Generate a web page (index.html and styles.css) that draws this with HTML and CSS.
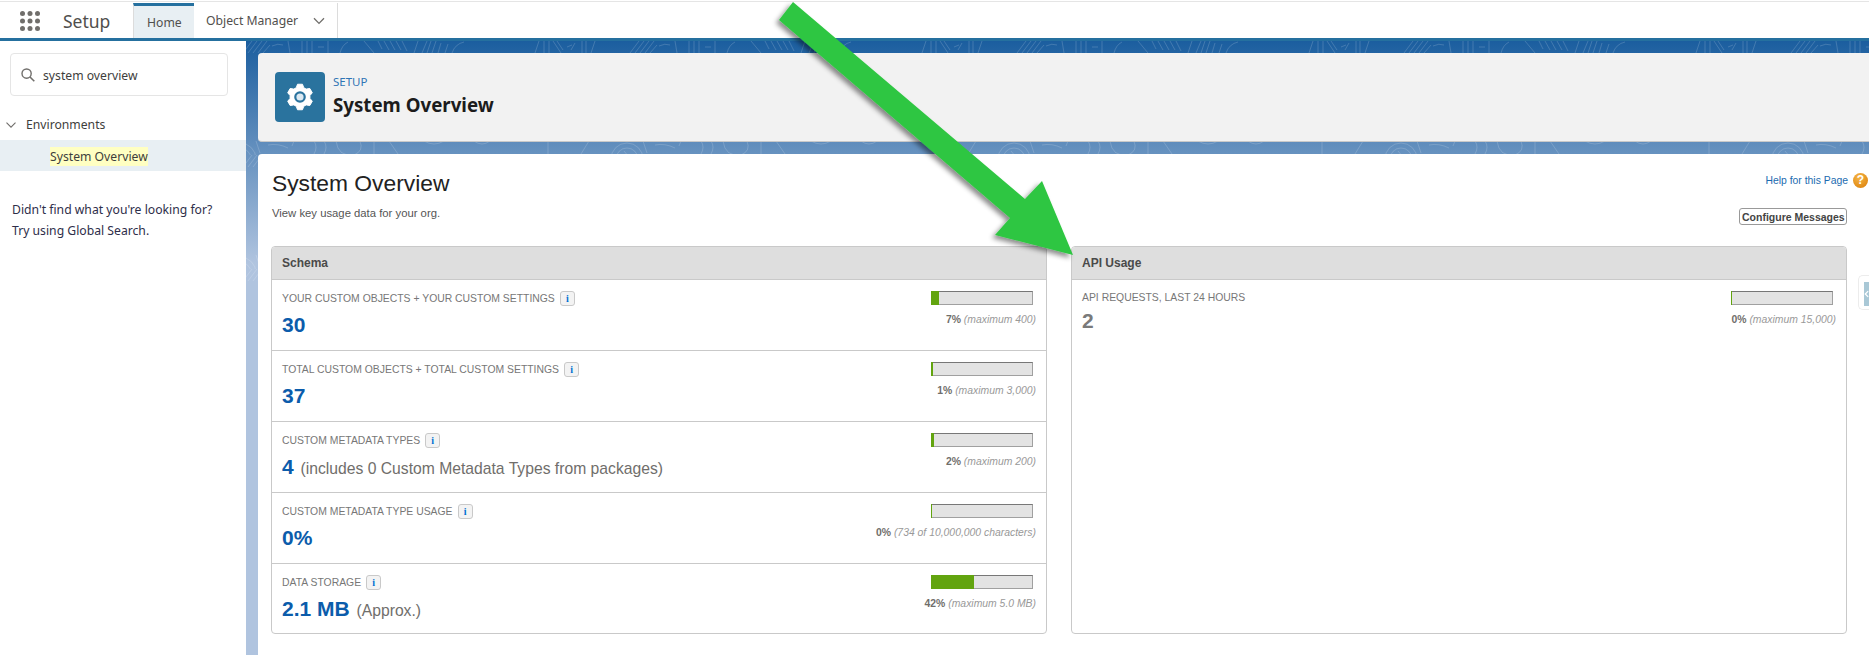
FILE: index.html
```html
<!DOCTYPE html>
<html lang="en">
<head>
<meta charset="utf-8">
<title>System Overview</title>
<link rel="stylesheet" href="styles.css">
</head>
<body>
<div class="page">
  <header class="nav">
    <svg class="app-grid" width="20" height="20" viewBox="0 0 20 20" aria-hidden="true">
      <g fill="#706e6b">
        <circle cx="2.5" cy="2.5" r="2.5"/><circle cx="10" cy="2.5" r="2.5"/><circle cx="17.5" cy="2.5" r="2.5"/>
        <circle cx="2.5" cy="10" r="2.5"/><circle cx="10" cy="10" r="2.5"/><circle cx="17.5" cy="10" r="2.5"/>
        <circle cx="2.5" cy="17.5" r="2.5"/><circle cx="10" cy="17.5" r="2.5"/><circle cx="17.5" cy="17.5" r="2.5"/>
      </g>
    </svg>
    <span class="app-name">Setup</span>
    <a class="tab tab-active">Home</a>
    <a class="tab tab-menu"><span class="tab-text">Object Manager</span>
      <svg class="tab-chevron" width="12" height="8" viewBox="0 0 12 8" aria-hidden="true"><path d="M1 1.2 6 6.4 11 1.2" fill="none" stroke="#706e6b" stroke-width="1.3"/></svg>
    </a>
  </header>
  <main class="main">
    <aside class="sidebar">
      <div class="search">
        <svg width="14" height="14" viewBox="0 0 14 14" aria-hidden="true"><circle cx="5.6" cy="5.6" r="4.6" fill="none" stroke="#706e6b" stroke-width="1.4"/><path d="M9 9l4.3 4.3" stroke="#706e6b" stroke-width="1.6"/></svg>
        <span>system overview</span>
      </div>
      <div class="tree-head">
        <svg width="10" height="6" viewBox="0 0 10 6" aria-hidden="true"><path d="M.5.6 5 5.2 9.5.6" fill="none" stroke="#706e6b" stroke-width="1.1"/></svg>
        <span>Environments</span>
      </div>
      <div class="tree-item"><mark class="hit">System Overview</mark></div>
      <p class="hint">Didn't find what you're looking for?<br>Try using Global Search.</p>
    </aside>
    <section class="content">
      <svg class="texture" width="1623" height="240" aria-hidden="true">
        <defs>
          <pattern id="swirls" x="-104" y="0" width="387" height="114" patternUnits="userSpaceOnUse">
            <g fill="none" stroke="#fff" stroke-opacity=".16" stroke-width="1">
              <path d="M6 12 10 0M15 12V0M20 12V0M24 0 32 12M28 0 34 9M38 6 43 4M46 2 42 9M53 12V0M57 12V0M62 12 66 0"/>
              <path d="M101 12 110 0M106 12 115 0M111 12 120 0M116 12 125 0M121 12 128 4M130 5Q136 2 141 4M148 12 146 0M160 12V0M165 12V0M170 12V0M176 6H182M186 12V0"/>
              <path d="M198 12Q200 4 206 1M222 0 232 12M236 0 240 8M242 0 247 9M248 0 253 9M254 0 259 9M260 0 265 10"/>
              <path d="M272 12 276 0M280 12 285 0M285 12 289 0M290 12 294 0M296 12 299 2M303 12 306 3M310 12Q313 3 322 1"/>
              <circle cx="98" cy="118" r="16"/><circle cx="98" cy="118" r="11"/><path d="M95 110 105 122"/>
              <path d="M19 113V100M52 113 60 100M114 100 118 112M126 104Q136 102 146 107M150 105 152 100M172 113Q176 106 172 100M182 113Q186 106 182 100"/>
              <path d="M194 100Q196 116 212 114Q222 110 218 100M232 113V100M247 100 256 113M282 100Q292 106 302 100M332 100Q340 106 348 100"/>
            </g>
          </pattern>
        </defs>
        <rect class="texture-fill" width="1623" height="240"/>
      </svg>
      <div class="page-header">
        <div class="header-icon">
          <svg width="28" height="28" viewBox="0 0 28 28" aria-hidden="true">
            <polygon fill="#fff" stroke="#fff" stroke-width="1" stroke-linejoin="round" points="11.52,1.24 16.48,1.24 17.75,4.73 20.16,6.12 23.81,5.47 26.29,9.76 23.9,12.61 23.9,15.39 26.29,18.24 23.81,22.53 20.16,21.88 17.75,23.27 16.48,26.76 11.52,26.76 10.25,23.27 7.84,21.88 4.19,22.53 1.71,18.24 4.1,15.39 4.1,12.61 1.71,9.76 4.19,5.47 7.84,6.12 10.25,4.73"/>
            <circle cx="14" cy="14" r="5.8" fill="#2a739e"/>
            <circle cx="14" cy="14" r="3.6" fill="#dbe9f2"/>
          </svg>
        </div>
        <div class="header-text">
          <div class="eyebrow">SETUP</div>
          <h1 class="header-title">System Overview</h1>
        </div>
      </div>
      <div class="card">
        <div class="card-top">
          <div class="card-heading">
            <h2 class="page-title">System Overview</h2>
            <p class="page-desc">View key usage data for your org.</p>
          </div>
          <div class="card-actions">
            <div class="help"><a class="help-link">Help for this Page</a><span class="help-icon">?</span></div>
            <button class="btn">Configure Messages</button>
          </div>
        </div>
        <div class="panels">
          <div class="panel">
            <div class="panel-head">Schema</div>
            <div class="row">
              <div class="row-main">
                <div class="label">YOUR CUSTOM OBJECTS + YOUR CUSTOM SETTINGS <span class="info">i</span></div>
                <div class="value"><b>30</b></div>
              </div>
              <div class="usage"><div class="bar"><div class="fill" style="width:7%"></div></div><div class="note"><b>7%</b> <i>(maximum 400)</i></div></div>
            </div>
            <div class="row">
              <div class="row-main">
                <div class="label">TOTAL CUSTOM OBJECTS + TOTAL CUSTOM SETTINGS <span class="info">i</span></div>
                <div class="value"><b>37</b></div>
              </div>
              <div class="usage"><div class="bar"><div class="fill" style="width:1%"></div></div><div class="note"><b>1%</b> <i>(maximum 3,000)</i></div></div>
            </div>
            <div class="row">
              <div class="row-main">
                <div class="label">CUSTOM METADATA TYPES <span class="info">i</span></div>
                <div class="value"><b>4</b> <span class="value-note">(includes 0 Custom Metadata Types from packages)</span></div>
              </div>
              <div class="usage"><div class="bar"><div class="fill" style="width:2%"></div></div><div class="note"><b>2%</b> <i>(maximum 200)</i></div></div>
            </div>
            <div class="row">
              <div class="row-main">
                <div class="label">CUSTOM METADATA TYPE USAGE <span class="info">i</span></div>
                <div class="value"><b>0%</b></div>
              </div>
              <div class="usage"><div class="bar"><div class="fill" style="width:0%"></div></div><div class="note"><b>0%</b> <i>(734 of 10,000,000 characters)</i></div></div>
            </div>
            <div class="row row-last">
              <div class="row-main">
                <div class="label">DATA STORAGE <span class="info">i</span></div>
                <div class="value"><b>2.1 MB</b> <span class="value-note">(Approx.)</span></div>
              </div>
              <div class="usage"><div class="bar"><div class="fill" style="width:42%"></div></div><div class="note"><b>42%</b> <i>(maximum 5.0 MB)</i></div></div>
            </div>
          </div>
          <div class="panel">
            <div class="panel-head">API Usage</div>
            <div class="row row-last">
              <div class="row-main">
                <div class="label label-plain">API REQUESTS, LAST 24 HOURS</div>
                <div class="value value-muted"><b>2</b></div>
              </div>
              <div class="usage"><div class="bar"><div class="fill" style="width:0%"></div></div><div class="note"><b>0%</b> <i>(maximum 15,000)</i></div></div>
            </div>
          </div>
        </div>
      </div>
      <div class="side-tab"><svg width="6" height="8" viewBox="0 0 6 8" aria-hidden="true"><path d="M5 .5 1.5 4 5 7.5" fill="none" stroke="#fff" stroke-width="1.5"/></svg></div>
    </section>
  </main>
  <svg class="arrow" width="320" height="270" viewBox="0 0 320 270" aria-hidden="true">
    <defs>
      <filter id="arrow-shadow" x="-10%" y="-10%" width="120%" height="120%">
        <feDropShadow dx="-3" dy="3" stdDeviation="2.5" flood-color="#000" flood-opacity=".45"/>
      </filter>
    </defs>
    <polygon fill="#2fc642" filter="url(#arrow-shadow)" points="44,2 30,20 261,218 246,235 324,255 293,181 276,199"/>
  </svg>
</div>
</body>
</html>
```
FILE: styles.css
```css
* { box-sizing: border-box; }
html, body { margin: 0; height: 100%; }
body { background: #fff; font-family: "Liberation Sans", Arial, sans-serif; color: #333; overflow: hidden; }
.page { position: relative; display: flex; flex-direction: column; height: 655px; width: 1869px; overflow: hidden; }

.nav { display: flex; align-items: stretch; height: 40px; margin-top: 1px; padding-top: 1px; border-top: 1px solid #e5e5e5; border-bottom: 3px solid #25709f; font-family: "Noto Sans", sans-serif; flex: none; }
.app-grid { align-self: center; margin-left: 20px; flex: none; }
.app-name { align-self: center; margin: 2px 0 0 23px; width: 70px; font-size: 17.5px; line-height: 1; color: #514f4d; }
.tab { display: flex; align-items: center; font-size: 12.2px; color: #514f4d; white-space: nowrap; }
.tab-active { width: 61px; padding-left: 13px; background: #e8eff3; border-top: 3px solid #25709f; border-left: 1px solid #dcdcdc; }
.tab-menu { width: 144px; border-right: 1px solid #dcdcdc; padding-left: 12px; }
.tab-text { width: 93px; flex: none; }
.tab-chevron { margin-left: 14px; flex: none; }

.main { display: flex; flex: 1; min-height: 0; }
.sidebar { width: 246px; flex: none; padding-top: 12px; font-family: "Noto Sans", sans-serif; font-size: 12.2px; color: #16325c; }
.search { display: flex; align-items: center; gap: 8px; margin: 0 18px 0 10px; height: 43px; padding: 1px 0 0 10px; border: 1px solid #e5e5e5; border-radius: 4px; color: #3e3e3c; }
.tree-head { display: flex; align-items: center; gap: 10px; height: 27px; margin-top: 15px; padding-left: 6px; color: #3e3e3c; }
.tree-item { height: 31px; margin-top: 2px; padding: 2px 0 0 50px; background: #e8eff3; display: flex; align-items: center; }
.hit { background: #ffffc2; color: #3e3e3c; padding: 1px 0; }
.hint { margin: 28px 0 0 12px; line-height: 21px; color: #2e2e4a; }

.content { position: relative; flex: 1; min-width: 0; padding: 12px 0 0 12px; background: #b0c4df; }
.texture { position: absolute; left: 0; top: 0; z-index: 1; }
.texture-fill { fill: url(#swirls); }
.content::before { content: ""; position: absolute; left: 0; right: 0; top: 0; height: 222px; background: linear-gradient(#1b5e9f, #b0c4df); }
.page-header, .card, .side-tab { position: relative; z-index: 2; }

.page-header { display: flex; align-items: center; gap: 8px; height: 89px; margin-bottom: 12px; padding-left: 17px; background: #f2f2f2; border-bottom: 1px solid #c9c9c9; border-radius: 4px 0 0 4px; }
.header-icon { display: flex; align-items: center; justify-content: center; width: 50px; height: 50px; background: #2a739e; border-radius: 4px; }
.header-text { margin-top: -4px; }
.eyebrow { font-family: "Noto Sans", sans-serif; font-size: 11.5px; line-height: 16px; color: #2f75b5; }
.header-title { margin: 3px 0 0; font-family: "Noto Sans", sans-serif; font-size: 18.7px; line-height: 24px; font-weight: 700; color: #1c1c1c; }

.card { height: 501px; padding: 14px 22px 0 13px; background: #fff; border-radius: 4px 0 0 0; }
.card-top { display: flex; justify-content: space-between; height: 78px; }
.card-heading { padding-left: 1px; }
.page-title { margin: 0; font-size: 22.8px; line-height: 30px; font-weight: 400; color: #222; }
.page-desc { margin: 8px 0 0; font-size: 11.3px; line-height: 14px; color: #555; }
.card-actions { display: flex; flex-direction: column; align-items: flex-end; }
.help { display: flex; align-items: center; margin: 3px -21px 0 0; gap: 5px; height: 18px; }
.help-link { font-size: 10.4px; color: #1b6bb0; }
.help-icon { display: flex; align-items: center; justify-content: center; width: 15px; height: 15px; border-radius: 50%; background: radial-gradient(circle at 40% 30%, #f5b545, #d97c06); color: #fff; font-size: 12px; font-weight: 700; }
.btn { height: 17px; margin-top: 19px; padding: 0 2px; background: #fff; border: 1px solid #999; border-radius: 3px; font: 700 10.5px "Liberation Sans", Arial, sans-serif; color: #444; width: 108px; white-space: nowrap; }

.panels { display: grid; grid-template-columns: 1fr 1fr; gap: 24px; }
.panel { height: 388px; border: 1px solid #c9c9c9; border-radius: 4px; overflow: hidden; }
.panel-head { height: 33px; padding-left: 10px; background: #dedede; border-bottom: 1px solid #c9c9c9; font-size: 12px; line-height: 32px; font-weight: 700; color: #4a4a4a; }
.row { display: flex; justify-content: space-between; height: 71px; padding: 11px 10px 0; border-bottom: 1px solid #c9c9c9; }
.row-last { border-bottom: 0; }
.label { display: flex; align-items: center; gap: 5px; height: 15px; font-size: 10.4px; color: #777; white-space: nowrap; }
.label-plain { margin-top: -1px; }
.info { display: inline-flex; align-items: center; justify-content: center; width: 15px; height: 15px; border: 1px solid #c9c9c9; border-radius: 3px; background: #f3f3f3; font: 700 10px "Liberation Serif", serif; color: #0070d2; }
.value { margin-top: 6px; font-size: 21px; line-height: 26px; color: #0b5cab; white-space: nowrap; }
.value-muted { margin-top: 3px; color: #7a7a7a; }
.value-note { margin-left: 1px; font-size: 15.7px; color: #706e6b; }
.usage { display: flex; flex-direction: column; align-items: flex-end; }
.bar { width: 102px; height: 14px; margin-right: 3px; background: #e3e3e3; border: 1px solid #a0a0a0; border-top-color: #777; }
.fill { box-sizing: content-box; height: 14px; margin: -1px 0 0 -1px; background: #62a40f; border-left: 1px solid #62a40f; }
.note { margin-top: 8px; font-size: 10.4px; line-height: 13px; color: #999; white-space: nowrap; }
.note b { color: #706e6b; }

.side-tab { position: absolute; right: 0; top: 234px; width: 11px; height: 35px; padding: 6px 0 0 5px; background: #fff; border: 1px solid #ececec; border-right: 0; border-radius: 5px 0 0 5px; z-index: 3; display: flex; }
.side-tab svg { background: #a9c8d6; width: 6px; height: 24px; padding: 8px 0; }

.arrow { position: absolute; left: 749px; top: 0; z-index: 5; overflow: visible; pointer-events: none; }
```
